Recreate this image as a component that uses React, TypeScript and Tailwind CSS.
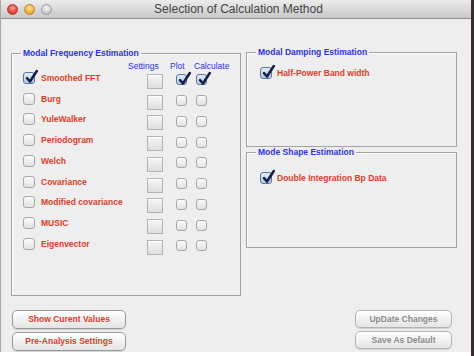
import React from "react";

const FONT = { fontFamily: '"Liberation Sans", Arial, sans-serif' };

function Box({ checked = false, size = "main" }: { checked?: boolean; size?: "main" | "small" }) {
  const dim = size === "main" ? "h-[12px] w-[12px]" : "h-[11px] w-[11px]";
  return (
    <span
      className={`relative inline-block shrink-0 rounded-[3px] border ${dim} ${
        checked
          ? "border-[#5a75a0] bg-gradient-to-b from-[#e3ecf7] to-[#b7cbe4]"
          : "border-[#a8a8a8] bg-gradient-to-b from-[#fbfbfb] to-[#e2e2e2]"
      }`}
    >
      {checked && (
        <svg
          className="absolute left-[0px] top-[-4px] h-[15px] w-[15px]"
          viewBox="0 0 15 15"
          fill="none"
        >
          <path d="M3 9.2 L6 12.5 L12.8 2" stroke="#182048" strokeWidth="2.6" strokeLinecap="round" strokeLinejoin="round" />
        </svg>
      )}
    </span>
  );
}

function SettingsBox() {
  return (
    <span className="mt-[7px] inline-block h-[15px] w-[16px] shrink-0 border border-[#b3b3b3] bg-gradient-to-b from-[#f6f6f6] to-[#dedede] shadow-[inset_0_1px_0_#ffffff]" />
  );
}

function Title({ children }: { children: React.ReactNode }) {
  return (
    <div className="-mt-[6px] flex h-[10px] pl-[9px]">
      <span className="bg-[#eeeeee] px-[2px] text-[8.5px] font-bold leading-[10px] text-[#2c33e0]">{children}</span>
    </div>
  );
}

const rows: { label: string; checked: boolean }[] = [
  { label: "Smoothed FFT", checked: true },
  { label: "Burg", checked: false },
  { label: "YuleWalker", checked: false },
  { label: "Periodogram", checked: false },
  { label: "Welch", checked: false },
  { label: "Covariance", checked: false },
  { label: "Modified covariance", checked: false },
  { label: "MUSIC", checked: false },
  { label: "Eigenvector", checked: false },
];

function Btn({ children, disabled = false, wide = true }: { children: React.ReactNode; disabled?: boolean; wide?: boolean }) {
  return (
    <div
      className={`flex items-center justify-center rounded-[5px] border bg-gradient-to-b from-[#ffffff] to-[#e4e4e4] text-[8.5px] font-bold shadow-[0_1px_1px_rgba(0,0,0,0.12)] ${
        wide ? "h-[19px] w-[114px]" : "h-[18px] w-[97px]"
      } ${disabled ? "border-[#b4b4b4] text-[#8c8c8c]" : "border-[#9a9a9a] text-[#d8402b]"}`}
    >
      {children}
    </div>
  );
}

export default function App() {
  return (
    <div className="flex h-[356px] w-[474px] bg-white" style={FONT}>
      <div className="flex h-[352px] w-[471px] flex-col border-l border-[#a9a9a9] bg-[#eeeeee]">
        {/* title bar */}
        <div className="relative flex h-[19px] shrink-0 items-center border-b border-[#8e8e8e] bg-gradient-to-b from-[#ececec] to-[#c8c8c8]">
          <div className="flex items-center gap-[6px] pl-[6px]">
            <span className="h-[11px] w-[11px] rounded-full border border-[#b23a30] bg-[radial-gradient(circle_at_50%_35%,#ff9c8f,#e0473a_60%,#b5322a)]" />
            <span className="h-[11px] w-[11px] rounded-full border border-[#b98526] bg-[radial-gradient(circle_at_50%_35%,#ffe29a,#f2b23b_60%,#c7871d)]" />
            <span className="h-[11px] w-[11px] rounded-full border border-[#9c9c9c] bg-[radial-gradient(circle_at_50%_35%,#f3f3f3,#cfcfcf_60%,#ababab)]" />
          </div>
          <div className="flex-1 pr-[46px] text-center text-[12px] leading-[19px] text-[#434343]">
            Selection of Calculation Method
          </div>
        </div>

        {/* body */}
        <div className="flex flex-1 flex-col px-[10px] pt-[34px]">
          <div className="flex gap-[5px]">
            {/* left panel */}
            <div className="h-[243px] w-[230px] border border-[#a2a2a2] shadow-[inset_1px_1px_0_#ffffff]">
              <Title>Modal Frequency Estimation</Title>
              <div className="mt-[3px] flex h-[10px] pl-[116px] text-[8.5px] leading-[10px] text-[#2c33e0]">
                <span className="w-[42px]">Settings</span>
                <span className="w-[24px]">Plot</span>
                <span>Calculate</span>
              </div>
              <div className="-mt-[3.4px] flex flex-col">
                {rows.map((r, i) => (
                  <div key={r.label} className="flex h-[20.75px] items-center pl-[11px]">
                    <Box checked={r.checked} />
                    <span className="ml-[6px] w-[106px] text-[8.5px] font-bold leading-[10px] text-[#d8402b]">
                      {r.label}
                    </span>
                    <SettingsBox />
                    <span className="ml-[13px] mt-[4px] flex">
                      <Box checked={i === 0} size="small" />
                    </span>
                    <span className="ml-[9px] mt-[4px] flex">
                      <Box checked={i === 0} size="small" />
                    </span>
                  </div>
                ))}
              </div>
            </div>

            {/* right column */}
            <div className="-mt-[1px] flex w-[211px] flex-col">
              <div className="h-[95px] border border-[#a2a2a2] shadow-[inset_1px_1px_0_#ffffff]">
                <Title>Modal Damping Estimation</Title>
                <div className="mt-[10px] flex items-center pl-[13px]">
                  <Box checked />
                  <span className="ml-[5px] text-[8.5px] font-bold leading-[10px] text-[#d8402b]">Half-Power Band width</span>
                </div>
              </div>
              <div className="mt-[5px] h-[96px] border border-[#a2a2a2] shadow-[inset_1px_1px_0_#ffffff]">
                <Title>Mode Shape Estimation</Title>
                <div className="mt-[15px] flex items-center pl-[13px]">
                  <Box checked />
                  <span className="ml-[5px] text-[8.5px] font-bold leading-[10px] text-[#d8402b]">Double Integration Bp Data</span>
                </div>
              </div>
            </div>
          </div>

          {/* buttons */}
          <div className="mt-[14px] flex justify-between">
            <div className="ml-[1px] flex flex-col gap-[3px]">
              <Btn>Show Curent Values</Btn>
              <Btn>Pre-Analysis Settings</Btn>
            </div>
            <div className="mr-[9px] flex flex-col gap-[3px]">
              <Btn disabled wide={false}>UpDate Changes</Btn>
              <Btn disabled wide={false}>Save As Default</Btn>
            </div>
          </div>
        </div>
      </div>
      <div className="h-full w-[3px] bg-[#3a2b2e]" />
    </div>
  );
}
